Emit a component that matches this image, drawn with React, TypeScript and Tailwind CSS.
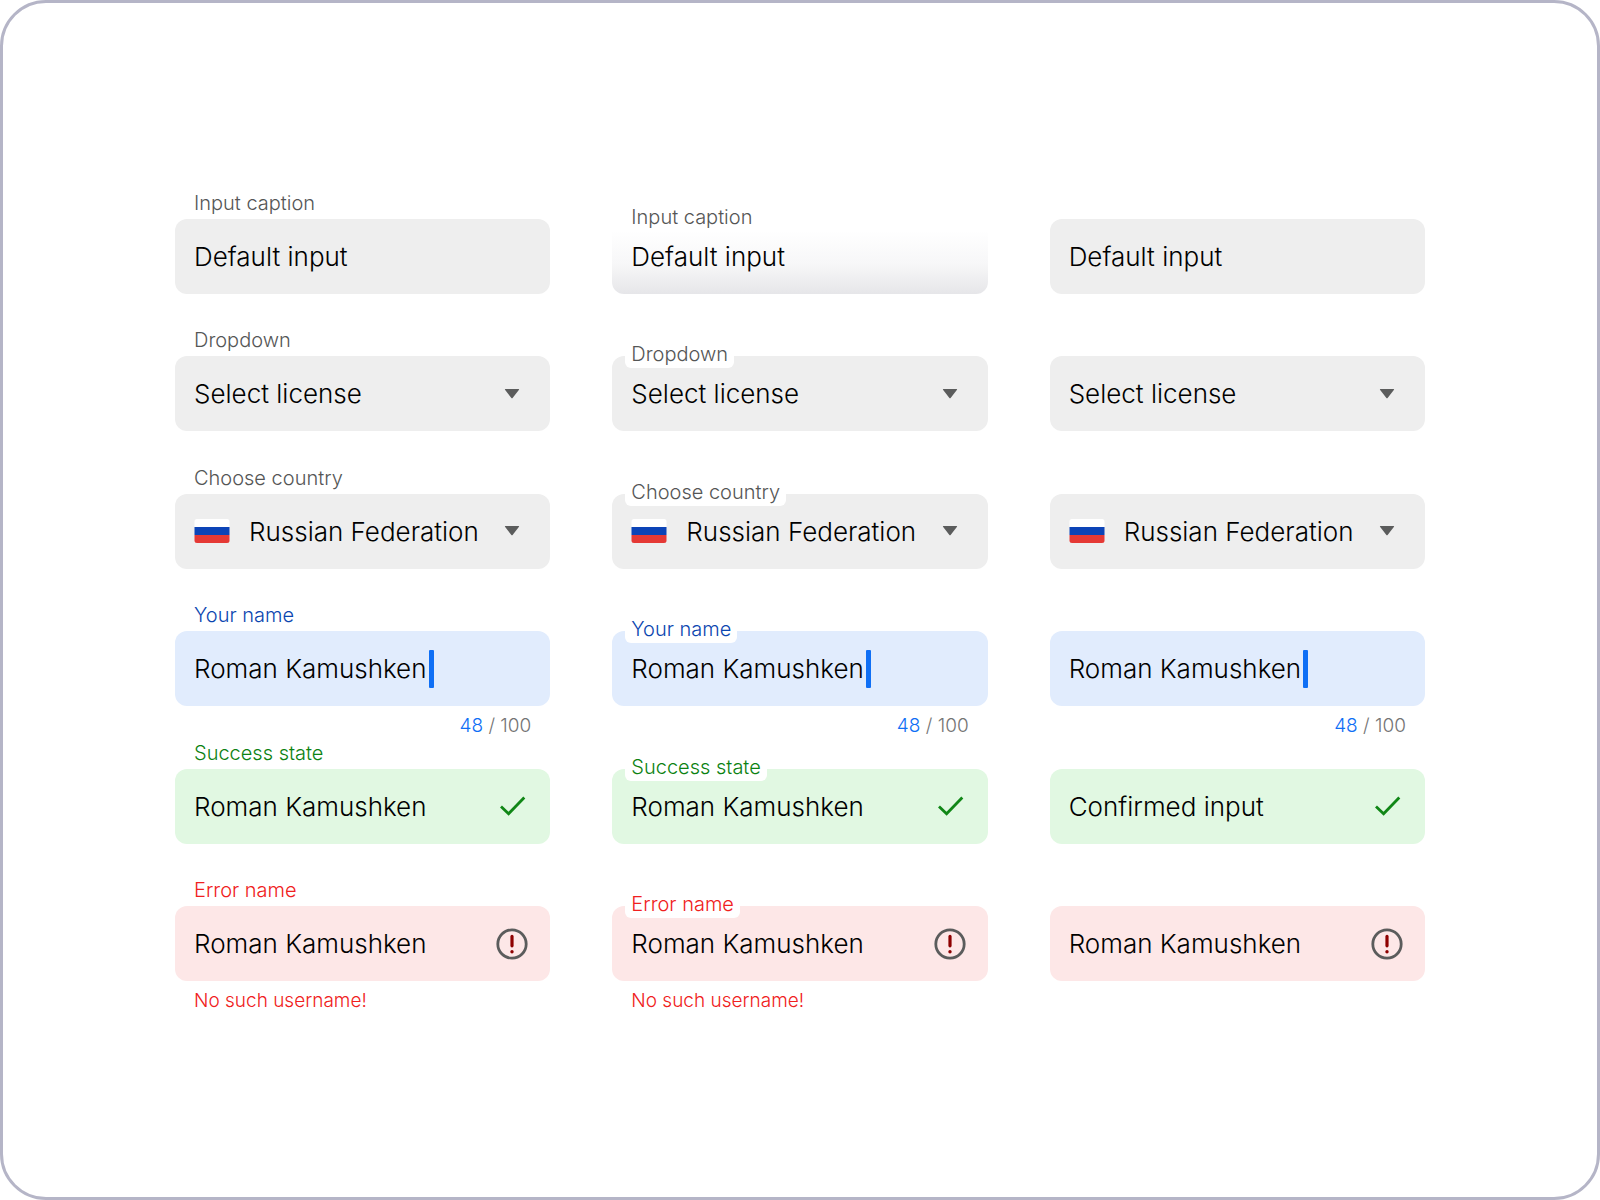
import { useId, useState } from "react";

type CaptionStyle = "above" | "notched" | "none";
type Tone = "default" | "active" | "success" | "error";

const boxTone: Record<Tone, string> = {
  default: "bg-[#eeeeee]",
  active: "bg-[#e1ecfd]",
  success: "bg-[#e1f8e2]",
  error: "bg-[#fde7e7]",
};

const captionTone: Record<Tone, string> = {
  default: "text-[#555656]",
  active: "text-[#0b46b0]",
  success: "text-[#0c8212]",
  error: "text-[#f02020]",
};

function Arrow() {
  return (
    <svg className="size-8" viewBox="0 0 32 32" aria-hidden="true">
      <path d="M9.400 11h13.200a.5.5 0 0 1 .4.8l-6.200 8a1 1 0 0 1-1.600 0l-6.200-8a.5.5 0 0 1 .4-.8z" fill="#5b5c5c" />
    </svg>
  );
}

function Check() {
  return (
    <svg className="size-8" viewBox="0 0 32 32" aria-hidden="true">
      <path d="M5 16.500l7.600 7.200L28.300 7.500" fill="none" stroke="#108716" strokeWidth="2.8" />
    </svg>
  );
}

function Alert() {
  return (
    <svg className="size-8" viewBox="0 0 32 32" aria-hidden="true">
      <circle cx="16" cy="16" r="14.2" fill="none" stroke="#5b5c5c" strokeWidth="2.8" />
      <path d="M16 8.400v9.400" stroke="#8e0000" strokeWidth="3.2" strokeLinecap="round" />
      <circle cx="16" cy="23.8" r="1.7" fill="#8e0000" />
    </svg>
  );
}

function Flag() {
  return (
    <svg className="h-6 w-9 shrink-0" viewBox="0 0 36 24" aria-hidden="true">
      <path d="M3 0h30a2.500 2.500 0 0 1 2.500 2.500V8H.5V2.500A2.500 2.500 0 0 1 3 0z" fill="#fff" />
      <path d="M.5 8h35v8H.5z" fill="#0c44b7" />
      <path d="M.5 16h35v5.500a2.500 2.500 0 0 1-2.500 2.500H3A2.500 2.500 0 0 1 .5 21.500z" fill="#e53935" />
    </svg>
  );
}

interface FieldProps {
  caption: string;
  captionStyle: CaptionStyle;
  value: string;
  tone?: Tone;
  select?: boolean;
  flag?: boolean;
  gradient?: boolean;
  counter?: boolean;
  helper?: string;
}

function Field({ caption, captionStyle, value, tone = "default", select, flag, gradient, counter, helper }: FieldProps) {
  const id = useId();
  const [text, setText] = useState(value);
  const ariaLabel = captionStyle === "none" ? caption : undefined;
  const background = gradient ? "bg-linear-to-b from-white from-15% via-[#f7f7f8] via-60% to-[#e6e6e9]" : boxTone[tone];

  return (
    <div className="flex flex-col">
      <div className="h-8 pl-[19px] text-[20px] leading-8">
        {captionStyle === "above" && (
          <label htmlFor={id} className={captionTone[tone]}>
            {caption}
          </label>
        )}
      </div>
      <div className={`relative flex h-[75px] items-center rounded-xl pr-[22px] pl-[19px] ${background}`}>
        {captionStyle === "notched" && (
          <label
            htmlFor={id}
            className={`absolute -top-4 left-[13px] rounded-md bg-white px-1.5 text-[20px] leading-7 ${captionTone[tone]}`}
          >
            {caption}
          </label>
        )}
        {flag && (
          <span className="mr-[19px] flex">
            <Flag />
          </span>
        )}
        {select ? (
          <select
            id={id}
            aria-label={ariaLabel}
            className="h-full min-w-0 flex-1 appearance-none bg-transparent text-[26px] text-black outline-none"
          >
            <option>{value}</option>
          </select>
        ) : (
          <input
            id={id}
            aria-label={ariaLabel}
            value={text}
            onChange={(e) => setText(e.target.value)}
            className={`h-full min-w-0 bg-transparent text-[26px] text-black outline-none ${
              tone === "active" ? "field-sizing-content" : "flex-1"
            }`}
          />
        )}
        {tone === "active" && <span className="ml-0.5 h-[38px] w-[5px] rounded-[1px] bg-[#0f6ff5]" />}
        {select && <Arrow />}
        {tone === "success" && <Check />}
        {tone === "error" && <Alert />}
      </div>
      {counter && (
        <p className="mt-1.5 -mb-2 pr-[19px] text-right text-[19px] leading-7 text-[#747474]">
          <span className="text-[#0f6ff5]">48</span> / 100
        </p>
      )}
      {helper && <p className="mt-1.5 -mb-2 pl-[19px] text-[19px] leading-7 text-[#f02020]">{helper}</p>}
    </div>
  );
}

const columns: CaptionStyle[] = ["above", "notched", "none"];

export default function App() {
  return (
    <main className="flex min-h-screen items-center justify-center rounded-[46px] border-3 border-[#b5b5c7] bg-white px-8 pb-0.5 font-['Inter',sans-serif] font-light">
      <form className="grid min-h-[825px] w-full max-w-[1250px] auto-rows-fr grid-cols-3 gap-x-[62px]">
        {columns.map((c) => (
          <Field key={c} caption="Input caption" captionStyle={c} value="Default input" gradient={c === "notched"} />
        ))}
        {columns.map((c) => (
          <Field key={c} caption="Dropdown" captionStyle={c} value="Select license" select />
        ))}
        {columns.map((c) => (
          <Field key={c} caption="Choose country" captionStyle={c} value="Russian Federation" select flag />
        ))}
        {columns.map((c) => (
          <Field key={c} caption="Your name" captionStyle={c} value="Roman Kamushken" tone="active" counter />
        ))}
        {columns.map((c) => (
          <Field
            key={c}
            caption="Success state"
            captionStyle={c}
            value={c === "none" ? "Confirmed input" : "Roman Kamushken"}
            tone="success"
          />
        ))}
        {columns.map((c) => (
          <Field
            key={c}
            caption="Error name"
            captionStyle={c}
            value="Roman Kamushken"
            tone="error"
            helper={c === "none" ? undefined : "No such username!"}
          />
        ))}
      </form>
    </main>
  );
}
